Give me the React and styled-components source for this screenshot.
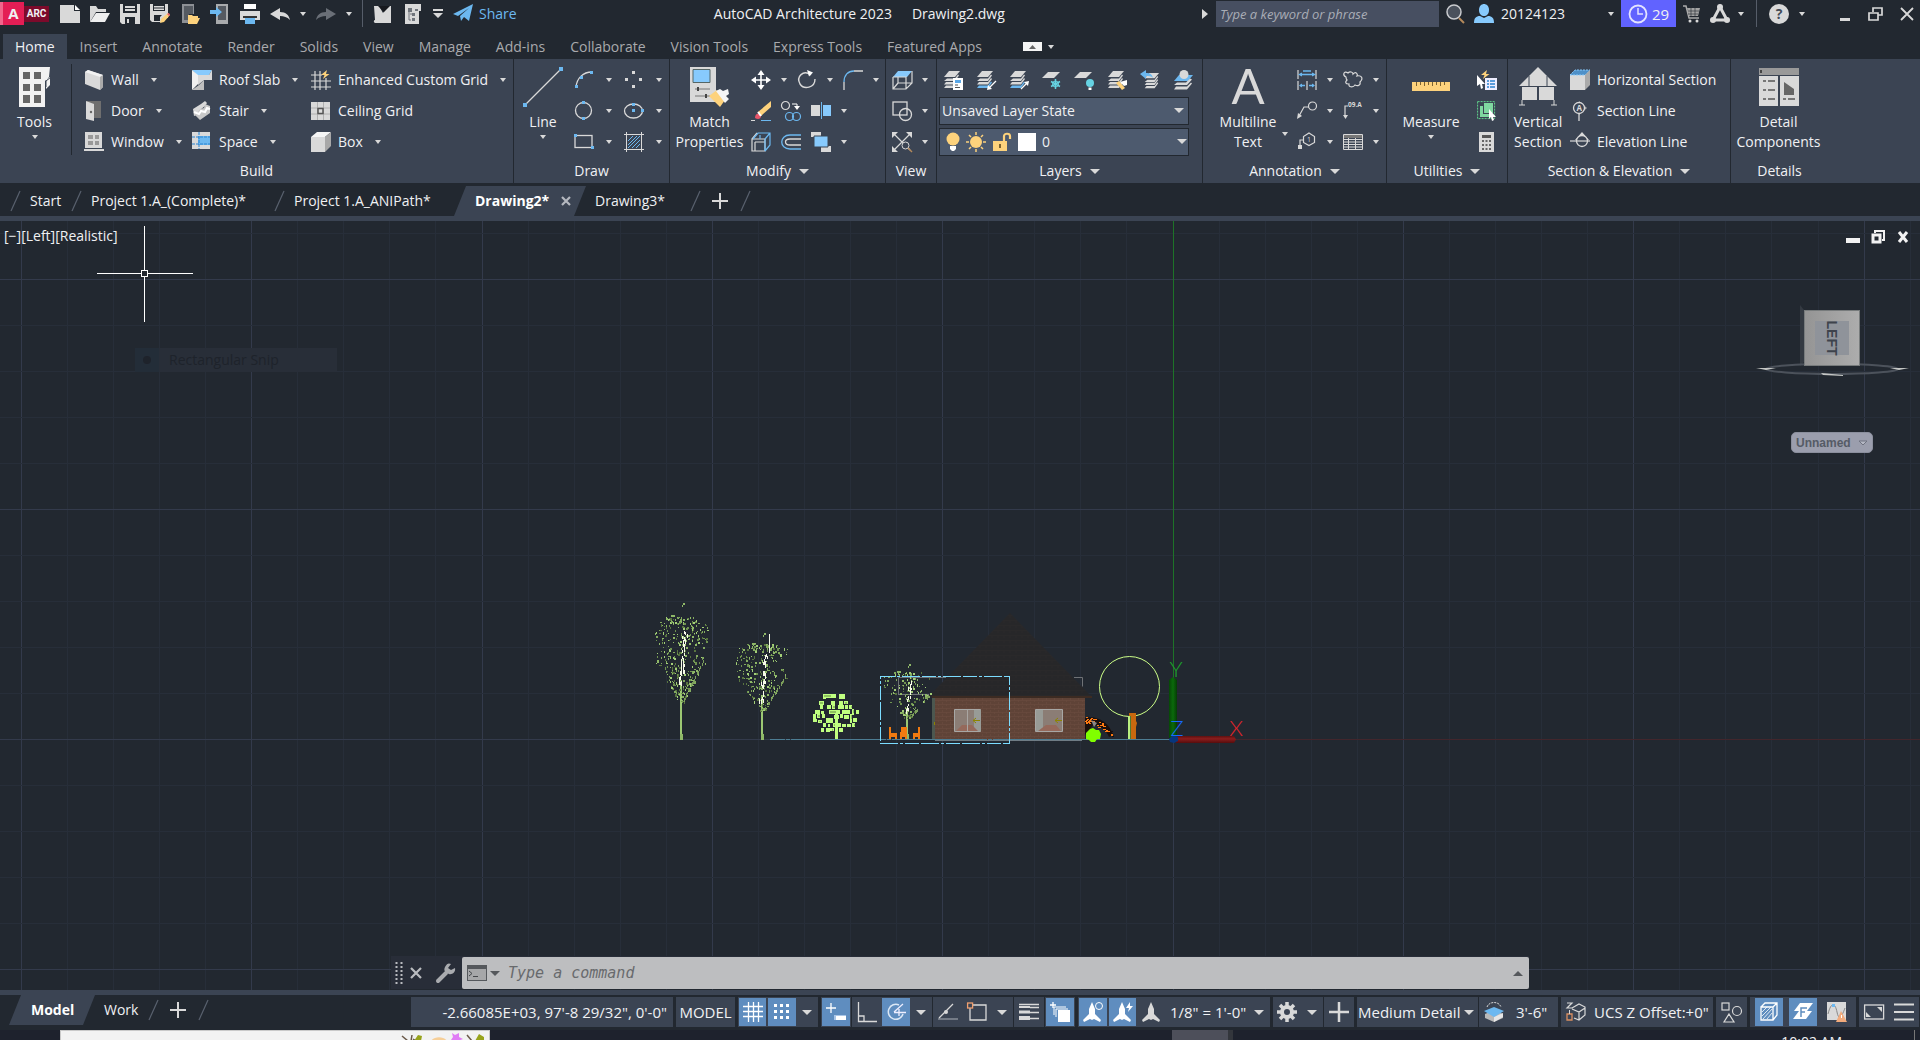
import React from "react";
import styled, { createGlobalStyle, css } from "styled-components";

const c = {
  dark: "#222830",
  panel: "#3b4453",
  field: "#4d5a6e",
  text: "#f0f1f3",
  icon: "#d9d9d9",
  sky: "#87cafd",
  blue: "#6cb8f0",
  gold: "#fdd27c",
  on: "#5f8dbf",
  teal: "#66d3e3",
};

const Global = createGlobalStyle`
  * { box-sizing: border-box; }
  body { margin: 0; background: ${c.dark}; overflow: hidden; }
  button, input, select { font: inherit; color: inherit; background: none; border: 0; padding: 0; margin: 0; border-radius: 0; }
  svg { display: block; flex: none; }
`;

const Page = styled.div`
  height: 100vh;
  display: flex;
  flex-direction: column;
  color: ${c.text};
  background: ${c.dark};
  font: 14px/20px "Open Sans", "Noto Sans", sans-serif;
  white-space: nowrap;
`;

/* ---------- icons ---------- */
const Svg = ({ w = 20, h = 20, children, ...p }) => (
  <svg width={w} height={h} viewBox={`0 0 ${w} ${h}`} fill="none" stroke="none" overflow="visible" aria-hidden="true" {...p}>{children}</svg>
);
const Caret = () => <Svg w={6} h={4}><path d="M0 0h6L3 4z" fill={c.icon} /></Svg>;
const WideCaret = ({ up, fill = c.icon }) => (
  <Svg w={10} h={5}><path d={up ? "M0 5h10L5 0z" : "M0 0h10L5 5z"} fill={fill} /></Svg>
);
const G = c.icon;
const Layers = ({ first = G, x = 0 }) => (
  <g transform={`translate(${x} 0)`}>
    <path d="M6 1h11l-5 6H1z" fill={G} />
    <path d="M4 8.500h8l3-4 1 1-4 5.500H1z" fill={G} />
    <path d="M3 12h9l3-4 1 1-4 5.500H1z" fill={G} />
    <path d="M3 15.500h9l3-4 1 1-4 5.500H1z" fill={first} />
  </g>
);
const Bolt = ({ x = 0, y = 0 }) => <path transform={`translate(${x} ${y})`} d="M6 0L0 5h3.500L2 9l6.500-5H5z" fill={c.gold} />;

const icons = {
  new: <><path d="M0 2h14v6h6v12H0z" fill={G} transform="translate(0 -1)" /><path d="M15 1v5h5z" fill="#fff" /></>,
  open: <><path d="M0 18V2h6l2 3h8v3H6z" fill={G} /><path d="M6 9h14l-5 9H0z" fill="#eee" /></>,
  save: <path fillRule="evenodd" d="M0 0h20v20H2l-2-2zM3 0v9h14V0zM5 13v7h10v-7zM5 2h10v2H5zM5 5h10v2H5zM7 15h2v4H7z" fill={G} />,
  saveas: <><path fillRule="evenodd" d="M0 0h18v14h-6v4H2l-2-2zM3 0v7h12V0zM4 2h10v1.500H4zM4 4.500h10V6H4zM4 11v6h6v-4l2-2z" fill={G} /><path d="M10 19l1-4 7-6 2 2-6 7z" fill={c.gold} /><path d="M17 10l2-1 1 2-1 1z" fill="#e8566a" /></>,
  mobileOpen: <><path d="M2 0h12v10H9v9H2z" fill="#8d9095" /><path d="M4 2h9v8H9v6H4z" fill="#555a61" /><path d="M8 11h4l1 1h5v2h2l-3 6H8z" fill={c.gold} /></>,
  mobileSave: <><rect x="6" width="12" height="20" fill="#a9abad" /><rect x="8" y="2" width="8" height="14" fill="#555a61" /><path d="M0 6h6V3l6 5-6 5V10H0z" fill={c.blue} /></>,
  print: <><path d="M4 0h12v5H4z" fill="#fff" /><path d="M0 7h20v9H0z" fill={G} /><path d="M3 12h14v2H3z" fill="#333" /><path d="M5 14h10v6H5z" fill={c.blue} /></>,
  undo: <path d="M0 10l10-6v4c6 0 9 3 10 8-3-3-6-4-10-4v4z" fill={G} />,
  redo: <path d="M20 10L10 4v4C4 8 1 11 0 16c3-3 6-4 10-4v4z" fill="#6a6f77" />,
  notes: <><path d="M1 2h5l4 7 5-7h3v17H2c-2-1-1-3 0-3z" fill={G} /><path d="M5 2h12l-6 6z" fill="#17191e" /></>,
  list: <><path d="M2 0h16v7h-2v13H2z" fill={G} /><path d="M5 4h4v4H5zM9 9h3v3H9zM9 14h3v3H9zM12 5h3v2h-3z" fill="#70757c" /><path d="M6 8v8h2M7 10h2" stroke="#70757c" /></>,
  plane: <path d="M0 10L20 0l-4 17-5-4-3 4-1-5L16 4 5 12z" fill={c.blue} />,
  search: <><circle cx="9" cy="8" r="7" stroke="#c9cbcf" strokeWidth="1.500" fill="#4a515c" /><path d="M14 14l5 5" stroke="#b58a5c" strokeWidth="2" /></>,
  user: <><path d="M5 6c0-8 10-8 10 0s-10 8-10 0z" fill={c.sky} /><path d="M0 19c0-5 2-7 6-7l4 2 4-2c4 0 6 2 6 7z" fill={c.sky} /></>,
  clock: <><circle cx="10" cy="10" r="8.500" stroke="#e4e4ff" strokeWidth="1.800" /><path d="M10 4v6h5" stroke="#e4e4ff" strokeWidth="1.500" /></>,
  cart: <><path d="M1 2h3l3 12h10" stroke="#aaa" strokeWidth="1.500" /><path d="M5 4h13l-2 8H7z" fill="#a3a3a3" /><path d="M6 7h11M6 10h10M9 4v8M13 4v8" stroke={c.dark} strokeWidth=".6" /><circle cx="8" cy="17" r="1.500" fill={G} /><circle cx="15" cy="17" r="1.500" fill={G} /></>,
  autodesk: <><path d="M10 3L3 16h14z" stroke={G} strokeWidth="3" /><circle cx="10" cy="3" r="3" fill={G} /><circle cx="3" cy="16" r="3" fill={G} /><circle cx="17" cy="16" r="3" fill={G} /></>,
  wall: <><path d="M1 2l3-2 15 5v12l-3 3L1 14z" fill={G} /><path d="M1 2l3-2 15 5-3 2z" fill="#f2f2f2" /><path d="M16 7l3-2v12l-3 3z" fill="#aaa" /></>,
  roof: <><path d="M0 0h20l-3 5H5z" fill={c.sky} /><path d="M0 0l6 5v9L0 20z" fill="#f0f0f0" /><path d="M0 20l7-5 5-5v10z" fill="#bfbfbf" /><path d="M6 5h11l3-5v10h-8l-6 5z" fill={G} /></>,
  egrid: <><path d="M4 1v19M9 1v19M15 8v12M0 5h11M0 11h20M0 17h20" stroke={G} strokeWidth="1.200" /><Bolt x={10} /></>,
  door: <><path d="M3 0h14v17H3z" fill="#6f6f6f" /><path d="M2 0l8 3v17l-8-2z" fill={G} /><circle cx="7" cy="11" r="1.200" fill="#666" /></>,
  stair: <><path d="M1 8l8-5 4-3 2 2-2 3-5 4-1 4-5 2z" fill={G} /><path d="M2 13l4-2 2-3 4-1 1-4 5 2v7L8 19z" fill="#c8c8c8" /><path d="M2 11l5 2 2-3 4 1 2-4 3 1" stroke="#fff" strokeWidth="2" /></>,
  ceiling: <><path d="M0 1h19v18H0z" fill={G} /><path d="M6.500 1v18M12.500 1v18M0 7h19M0 13h19" stroke="#b0b0b0" /><rect x="7" y="7.500" width="5" height="5" stroke="#555" strokeWidth="1.500" fill="#ddd" /></>,
  window: <><path d="M1 0h17v16H1z" fill={G} /><path d="M4 3h5v4H4zM11 3h4v4h-4zM4 9h5v4H4zM11 9h4v4h-4z" fill="#999" /><path d="M0 17h20v2H0z" fill={G} /></>,
  space: <><path d="M0 0h18v17H0z" fill={G} /><path d="M6 4h12v9H6z" fill={c.blue} /><path d="M0 5h18M0 12h18M7 0v17" stroke="#2b83cf" strokeDasharray="3 1" /></>,
  box: <><path d="M0 5h14v15H0z" fill={G} /><path d="M0 5l6-5h14l-6 5z" fill="#f5f5f5" /><path d="M14 5l6-5v14l-6 6z" fill="#a8a8a8" /></>,
  arc: <><path d="M2 17C3 8 9 2 18 2" stroke={G} strokeWidth="1.300" /><path d="M1 15h3v3H1zM6 6h3v3H6zM16 1h3v3h-3z" fill={c.blue} /></>,
  point: <path d="M8 1h3v3H8zM1 8h3v3H1zM15 8h3v3h-3zM8 15h3v3H8z" fill={G} />,
  circle: <><circle cx="9.500" cy="9.500" r="8" stroke={G} strokeWidth="1.300" /><path d="M8 0h3v3H8zM8 16h3v3H8z" fill={c.blue} /></>,
  ellipse: <><ellipse cx="9.500" cy="10" rx="9" ry="7" stroke={G} strokeWidth="1.300" /><path d="M8 2h3v3H8zM8 8h3v3H8zM17 8h3v3h-3z" fill={c.blue} /></>,
  rect: <><rect x="1" y="3.500" width="17" height="12" stroke={G} strokeWidth="1.300" /><path d="M0 2h3v3H0zM17 14h3v3h-3z" fill={c.blue} /></>,
  hatch: <><path d="M2.500 0v20M17.500 0v20M0 2.500h20M0 17.500h20" stroke={G} /><path d="M4 9l5-5M4 13l9-9M4 16L16 4M8 16l8-8M12 16l4-4" stroke={c.blue} /></>,
  move: <><path d="M10 2v16M2 10h16" stroke="#fff" strokeWidth="1.600" /><path d="M10 0l3.500 5h-7zM10 20l3.500-5h-7zM0 10l5-3.500v7zM20 10l-5-3.500v7z" fill="#fff" /></>,
  rotate: <><path d="M14 5C6-1-1 7 3 14c4 6 15 4 15-5" stroke={G} strokeWidth="1.400" /><path d="M10 0l6 2.500-4 4z" fill="#fff" /></>,
  fillet: <><path d="M1 20V12M11 1h9" stroke={G} strokeWidth="1.300" /><path d="M1 12C1 5 5 1 11 1" stroke={c.blue} strokeWidth="1.300" /></>,
  erase: <><path d="M7 11L20 0v6L10 15z" fill={c.gold} /><path d="M4 17c0-4 3-6 6-2 0 3-3 4-6 2z" fill="#e8566a" /><path d="M7 11l3 4" stroke="#fff" strokeWidth="2" /><path d="M0 19.500h4" stroke={G} /><path d="M10 19.500h10" stroke={c.blue} /></>,
  copy: <><circle cx="4.500" cy="4.500" r="4" stroke={G} strokeWidth="1.200" /><path d="M11 3h5v3" stroke="#fff" /><path d="M13 5h6l-3 4z" fill="#fff" /><circle cx="8.500" cy="15.500" r="4" stroke={c.blue} strokeWidth="1.200" /><circle cx="15.500" cy="15.500" r="4" stroke={c.blue} strokeWidth="1.200" /></>,
  mirror: <><path d="M0 4h9v11H0z" fill={G} /><path d="M12 4h8v11h-8z" fill={c.sky} /><path d="M10.500 1v17" stroke={c.blue} /></>,
  extrude: <><path d="M1 7h13v12H1zM4 10h10M4 10v9M1 7l5-6" stroke={G} strokeWidth="1.200" /><path d="M2 7l5-6h12v12l-5 6M14 7l5-6M14 7v12M9 3v4" stroke={c.blue} strokeWidth="1.200" /></>,
  offset: <><path d="M20 3H9C-2 3-2 17 9 17h11" stroke={c.blue} strokeWidth="1.300" /><path d="M20 7H9c-6 0-6 6 0 6h11" stroke={G} strokeWidth="1.300" /></>,
  order: <><path d="M0 0h10v5H0zM10 14h10v6H10z" fill={G} /><path d="M3 4h14v11H3z" fill={c.sky} stroke={c.panel} /></>,
  cube: <><path d="M6 1h14l-5 6H1z" fill={c.sky} /><path d="M1 7v12h13l6-6V1M14 19V7H1M6 7v6h14M6 13l-5 6" stroke={G} strokeWidth="1.200" /></>,
  shapes: <><rect x="1" y="1" width="14" height="13" stroke={G} strokeWidth="1.300" /><circle cx="13.500" cy="13.500" r="6" stroke={G} strokeWidth="1.300" /></>,
  zoomx: <><path d="M2 2l16 16M18 2L2 18" stroke={G} strokeWidth="1.200" /><path d="M0 0h6L0 6zM20 0v6l-6-6zM0 20v-6l6 6z" fill={G} /><circle cx="13.500" cy="13.500" r="3.500" stroke={G} fill={c.panel} /><path d="M16 16l4 4" stroke="#b58a5c" strokeWidth="1.500" /></>,
  layerProps: <><Layers /><path d="M10 8h10v12H10z" fill="#fff" /><path d="M12 10h6v3h-6z" fill="#5aa7e6" /><path d="M12 15h3M12 17.500h5" stroke="#555" /></>,
  layerIn: <><Layers first={c.blue} /><path d="M20 11l-7 7" stroke="#fff" strokeWidth="1.300" /><path d="M11 20l1-5 4 4z" fill="#fff" /></>,
  layerOut: <><Layers first={c.blue} /><path d="M12 19l6-6" stroke="#fff" strokeWidth="1.300" /><path d="M20 11l-1 5-4-4z" fill="#fff" /></>,
  layerFreeze: <><path d="M6 2h12l-6 6H0z" fill={G} /><path d="M13.500 9v10M9 11.500l9 5M9 16.500l9-5" stroke={c.teal} strokeWidth="1.500" /><circle cx="13.500" cy="14" r="3" stroke={c.teal} /></>,
  layerOff: <><path d="M6 2h12l-6 6H0z" fill={G} /><circle cx="16" cy="13" r="4" fill={c.teal} /><path d="M14.500 17.500h3V20h-3z" fill="#fff" /></>,
  layerMatch: <><Layers /><path d="M9 13l3-2 6 7-3 2z" fill={c.gold} /><path d="M13 12l7-2v5l-3 1z" fill="#fff" /></>,
  layerPrev: <><g transform="translate(2 2) scale(.9)"><Layers x={2} /></g><path d="M0 4l6-4v3c4 0 6 1 7 5-2-2-4-2-7-2v3z" fill={c.blue} /></>,
  layerIso: <><path d="M6 5h14l-5 6H1z" fill={c.blue} /><circle cx="11" cy="4.500" r="4.500" fill={G} /><path d="M4 12.500h9l4-4 2 1-5 5.500H1zM3 16.500h11l4-4 1 1-5 6H1z" fill={G} /></>,
  dim: <><path d="M1 0v9M19 0v9M1 11v9M10 11v9M19 11v9" stroke={G} strokeWidth="1.200" /><path d="M3 4.500h14M6 1h8M3 15.500h5M12 15.500h5" stroke={c.blue} strokeWidth="1.300" /><path d="M1 4.500l4-2v4zM19 4.500l-4-2v4zM2 15.500l3-2v4zM18 15.500l-3-2v4z" fill={c.blue} /></>,
  cloud: <path d="M3 7c-4-2-2-7 2-4 2-2 5-1 5 1 3-3 5 0 4 2 4-1 7 2 3 6 1 4-3 4-5 3-2 3-7 2-6-1-4 0-4-2-2-4-1-1-1-2-1-3z" stroke={G} strokeWidth="1.200" />,
  leader: <><circle cx="15.500" cy="5" r="4" stroke={G} strokeWidth="1.200" /><path d="M12 6H7l-5 9" stroke={G} strokeWidth="1.200" /><path d="M0 18l1-6 4 3z" fill={G} /></>,
  keynote: <><path d="M5 5H2v11" stroke={G} strokeWidth="1.200" /><path d="M0 14h5l-2.500 4z" fill={G} /><text x="5" y="6" fontSize="6.500" fontWeight="700" fill={G}>09.A</text></>,
  tag: <><path d="M12 1l5.500 3.500v6L12 13.500 6.500 10.500v-6z" stroke={G} strokeWidth="1.200" /><text x="10" y="10" fontSize="7" fill={G}>1</text><path d="M6 8H3v8" stroke={G} strokeWidth="1.200" /><path d="M1 13h4v4H1z" fill={G} /></>,
  table: <><path d="M.5 2.500h19v15H.5zM0 7.500h20M0 12.500h20M0 10h20M0 15h20" stroke={G} /><path d="M5.500 6v12M12.500 6v12" stroke={G} /><path d="M1 3h18v3H1z" fill="#777" /></>,
  quick: <><Bolt x={4} /><path d="M0 5l8 9H5l1 4-2 1-1-5-3 2z" fill="#fff" /><path d="M8 8h12v12H8z" fill="#eef" /><path d="M10 11h2M10 14h2M10 17h2M13 11h5M13 14h5M13 17h5" stroke="#2b83cf" strokeWidth="1.300" /></>,
  select: <><rect x=".6" y=".6" width="17" height="17" stroke="#5fd08a" strokeDasharray="2 1" /><path d="M3 5h3v8h8v3H3z" fill="#7fd8a0" /><path d="M7 2h9v10H7z" fill="#7fd8a0" /><path d="M12 8l7 8h-3l1 3-2 1-1-4-2 2z" fill="#fff" /></>,
  calc: <><path d="M2 0h15v20H2z" fill={G} /><path d="M5 3h9v3H5z" fill="#555" /><path d="M5 8h2v2H5zM8.500 8h2v2h-2zM12 8h2v2h-2zM5 12h2v2H5zM8.500 12h2v2h-2zM12 12h2v2h-2zM5 16h2v2H5zM8.500 16h2v2h-2zM12 16h2v2h-2z" fill="#666" /></>,
  hsection: <><path d="M0 5h15v15H0z" fill={G} /><path d="M0 5l5-5h15l-5 5z" fill="#4e90c8" /><path d="M0 5l5-5h15l-5 5z" stroke={c.sky} strokeDasharray="2 1" /><path d="M15 5l5-5v15l-5 5z" fill="#aaa" /></>,
  sline: <><path d="M9 0l8 7-8 7z" fill="#aaa" /><circle cx="9" cy="7" r="5.500" fill={c.panel} stroke={G} strokeWidth="1.300" /><text x="6.500" y="9.800" fontSize="8" fontWeight="700" fill={G}>A</text><path d="M9 13v7" stroke={G} strokeWidth="1.300" /></>,
  eline: <><path d="M12 0l7 8H5z" fill={G} /><circle cx="12" cy="9" r="5.500" fill={c.panel} stroke={G} strokeWidth="1.300" /><path d="M0 9h20" stroke={G} strokeWidth="1.200" /></>,
};
const Icon = ({ n, w = 20 }) => <Svg w={w} viewBox="0 0 20 20">{icons[n]}</Svg>;

const bigIcons = {
  tools: <><path d="M5 0h30l-1 10-4 4v26H4V0z" fill="#f2f2f2" /><path d="M31 12l4-2v8l-4 4z" fill="#f2f2f2" /><path d="M31 20v-6l5-4" stroke={c.panel} /><path d="M8 5h7v7H8zM19 5h7v7h-7zM8 17h7v7H8zM19 17h7v7h-7zM8 28h7v8H8zM19 28h7v8h-7z" fill="#666" /></>,
  line: <><path d="M2 38L38 2" stroke={G} strokeWidth="1.300" /><path d="M0 36h4v4H0zM36 0h4v4h-4z" fill={c.blue} /></>,
  match: <><path d="M0 0h26v35H0z" fill={G} /><path d="M3 2.500h17v13H3z" fill={c.sky} stroke="#566" /><path d="M5 22h15M5 29h15" stroke="#777" /><path d="M7 20h2v4H7zM15 27h2v4h-2z" fill="#444" /><path d="M19 29l8-6 8 10-5 7z" fill={c.gold} /><path d="M26 24l4-2 3 2 5-2 1 5-3 2 3 3-4 4z" fill="#f5f5f5" /></>,
  mtext: <text x="20" y="37" textAnchor="middle" fontFamily="Lato" fontSize="49" fill={G}>A</text>,
  ruler: <><path d="M1 15h38v9H1z" fill={c.gold} /><path d="M5.500 15v4M9.500 15v3M13.500 15v4M17.500 15v3M21.500 15v4M25.500 15v3M29.500 15v4M33.500 15v3" stroke="#7b6231" /></>,
  vsection: <><path d="M20 0l19 19H1z" fill={G} /><path d="M4 20h15v13H4zM21 20h15v13H21z" fill={G} /><path d="M4 33v5M36 33v5M1 38h6M33 38h6" stroke={G} /><path d="M11 9v10M29 9v10M1 19.500h38" stroke={c.panel} /></>,
  detail: <><path d="M0 1h40v7H0z" fill="#999" /><path d="M1 3h2v3H1z" fill="#444" /><path d="M0 9h19v30H0zM21 9h19v30H21z" fill={G} /><path d="M25 15l10 7v6H25z" fill="#666" /><path d="M4 14h3M9 14h7M4 23h3M9 23h7M4 32h3M9 32h7M24 32h3M29 32h7" stroke="#555" strokeWidth="1.500" /></>,
};

/* ---------- title bar ---------- */
const TitleBar = styled.header`
  display: flex;
  align-items: center;
  height: 27px;
`;
const Bar = styled.div`
  display: flex;
  align-items: center;
  gap: ${(p) => p.$gap ?? 10}px;
`;
const Tool = styled.button`
  display: flex;
  align-items: center;
  gap: ${(p) => p.$gap ?? 10}px;
`;
const Logo = styled.div`
  display: flex;
  align-items: center;
  margin-right: 1px;
  font-weight: 700;
`;
const LogoA = styled.span`
  width: 24px;
  height: 23px;
  background: #e41e55;
  border-left: 3px solid #f2668c;
  text-align: center;
  line-height: 22px;
  font-size: 15px;
`;
const LogoArc = styled.span`
  width: 25px;
  height: 16px;
  background: #7c0a2b;
  font: 700 10px/16px Roboto, sans-serif;
  text-align: center;
`;
const Rule = styled.span`
  width: 1px;
  height: 27px;
  background: #565d69;
`;
const ShareLabel = styled.span`
  color: ${c.blue};
`;
const Title = styled.h1`
  flex: 1;
  display: flex;
  justify-content: center;
  gap: 20px;
  margin: 0;
  padding-top: 1px;
  font-size: 14px;
  font-weight: 400;
`;
const Search = styled.input`
  width: 223px;
  height: 26px;
  padding: 0 4px;
  margin-right: 6px;
  background: #474f61;
  font-size: 13px;
  font-style: italic;
  &::placeholder { color: #a9adb6; opacity: 1; }
`;
const Account = styled.button`
  display: flex;
  align-items: center;
  gap: 7px;
  width: 140px;
  margin: 0 7px 0 9px;
  > :last-child { margin-left: auto; }
`;
const Trial = styled.button`
  display: flex;
  align-items: center;
  gap: 4px;
  width: 55px;
  height: 27px;
  padding-left: 7px;
  margin-right: 6px;
  background: #6163ff;
  font-size: 15px;
`;
const Help = styled.span`
  width: 20px;
  height: 20px;
  border-radius: 50%;
  background: ${G};
  color: #444b57;
  font-weight: 700;
`;
const WindowButtons = styled.div`
  display: flex;
  align-items: center;
  justify-content: space-between;
  width: 74px;
  margin: 0 6px 0 35px;
`;

/* ---------- ribbon ---------- */
const Tabs = styled.nav`
  display: flex;
  align-items: stretch;
  gap: 1px;
  height: 32px;
  padding: 7px 0 0 3px;
`;
const Tab = styled.button`
  padding: 0 12px;
  line-height: 25px;
  color: ${(p) => (p.$active ? c.text : "#a9aaad")};
  background: ${(p) => (p.$active ? c.panel : "none")};
`;
const Collapse = styled.button`
  display: flex;
  align-items: center;
  gap: 6px;
  margin-left: 28px;
`;
const Ribbon = styled.section`
  display: flex;
  height: 124px;
  background: ${c.panel};
`;
const Panel = styled.div`
  width: ${(p) => p.$w}px;
  padding-top: 5px;
  border-right: ${(p) => (p.$last ? 0 : 1)}px solid ${c.dark};
`;
const PanelBody = styled.div`
  display: flex;
  height: 93px;
  padding-left: ${(p) => p.$pad ?? 0}px;
`;
const PanelTitle = styled.div`
  display: flex;
  align-items: center;
  justify-content: center;
  gap: 8px;
  height: 26px;
  padding-top: 2px;
`;
const Big = styled.button`
  display: flex;
  flex-direction: column;
  align-items: center;
  gap: 3px;
  width: ${(p) => p.$w}px;
  padding: 3px 2px 0 0;
`;
const BigText = styled.span`
  padding-top: 2px;
  text-align: center;
  white-space: pre-line;
`;
const ToolsDivider = styled.span`
  width: 1px;
  height: 91px;
  margin-right: 12px;
  background: ${c.dark};
`;
const Col = styled.div`
  display: grid;
  grid-template-rows: repeat(3, 31px);
  width: ${(p) => (p.$w ? p.$w + "px" : "auto")};
`;
const Item = styled.button`
  display: flex;
  align-items: center;
  gap: 7px;
  > :nth-child(3) { margin-left: 5px; }
`;
const BigTool = ({ icon, w, caret, children }) => (
  <Big $w={w}>
    <Svg w={40} h={40}>{bigIcons[icon]}</Svg>
    <BigText>{children}</BigText>
    {caret && <Caret />}
  </Big>
);
const TextTool = ({ icon, caret, children }) => (
  <Item><Icon n={icon} /><span>{children}</span>{caret && <Caret />}</Item>
);
const Rows = ({ rows, gap }) => (
  <Col>
    {rows.map((row, i) => (
      <Bar key={i} $gap={gap}>
        {row.map(([n, caret]) => (
          <Tool key={n} aria-label={n} $gap={gap}><Icon n={n} />{caret && <Caret />}</Tool>
        ))}
      </Bar>
    ))}
  </Col>
);
const RibbonPanel = ({ title, menu, w, pad, last, children }) => (
  <Panel $w={w} $last={last}>
    <PanelBody $pad={pad}>{children}</PanelBody>
    <PanelTitle>{title}{menu && <WideCaret />}</PanelTitle>
  </Panel>
);
const LayerTools = styled.div`
  display: flex;
  align-items: center;
  justify-content: space-between;
  width: 250px;
  margin-left: 4px;
`;
const Combo = styled.label`
  display: flex;
  align-items: center;
  align-self: center;
  gap: 6px;
  width: 250px;
  height: 28px;
  padding: 0 ${(p) => p.$end ?? 4}px 0 ${(p) => p.$pad ?? 2}px;
  border: 1px solid ${c.dark};
  background: ${c.field};
`;
const Select = styled.select`
  flex: 1;
  appearance: none;
  outline: 0;
`;
const Swatch = styled.span`
  width: 18px;
  height: 18px;
  background: #fff;
`;
const MultiText = styled.div`
  display: flex;
  align-items: flex-end;
  width: 94px;
  padding: 0 0 21px 13px;
  > button { align-self: flex-start; }
`;

/* ---------- drawing tabs ---------- */
const FileTabs = styled.nav`
  display: flex;
  align-items: flex-end;
  height: 33px;
  padding-left: 11px;
`;
const FileTab = styled.button`
  display: flex;
  align-items: center;
  gap: ${(p) => p.$gap ?? 10}px;
  width: ${(p) => p.$w}px;
  height: 30px;
  ${(p) => p.$active && css`
    padding-left: 21px;
    background: ${c.panel};
    font-weight: 700;
    color: #fff;
    clip-path: polygon(12px 0, 100% 0, calc(100% - 12px) 100%, 0 100%);
  `}
`;
const Slash = () => <Svg w={9} h={20}><path d="M0 20L9 0" stroke="#59616e" strokeWidth="1.200" /></Svg>;
const Plus = () => <Svg w={16} h={16}><path d="M8 0v16M0 8h16" stroke={G} strokeWidth="2" /></Svg>;

/* ---------- viewport ---------- */
const Viewport = styled.main`
  position: relative;
  flex: 1;
  min-height: 0;
  overflow: hidden;
  border: solid ${c.panel};
  border-width: 5px 0;
`;
const Model = styled.svg`
  width: 100%;
  height: 100%;
`;
const ViewLabel = styled.div`
  position: absolute;
  left: 4px;
  top: 5px;
`;
const Snip = styled.div`
  position: absolute;
  left: 135px;
  top: 127px;
  display: flex;
  align-items: center;
  gap: 18px;
  width: 202px;
  height: 24px;
  padding-left: 8px;
  background: linear-gradient(90deg, #232d38 24px, #282e38 24px);
  color: #1e232b;
`;
const SnipDot = styled.span`
  width: 8px;
  height: 8px;
  border-radius: 50%;
  background: #1e232b;
`;
const ViewButtons = styled.div`
  position: absolute;
  right: 10px;
  top: 9px;
  display: flex;
  gap: 11px;
`;
const CubeBox = styled.div`
  position: absolute;
  right: 11px;
  top: 80px;
`;
const Ucs = styled.button`
  position: absolute;
  right: 47px;
  top: 211px;
  display: flex;
  align-items: center;
  justify-content: space-between;
  width: 82px;
  height: 21px;
  padding: 0 4px;
  border: 1px solid #8b8f9d;
  border-radius: 5px;
  background: #9b9ead;
  color: #555b66;
  font: 700 12px "Liberation Sans", Arial, sans-serif;
`;
const Command = styled.div`
  position: absolute;
  left: 50%;
  bottom: 1px;
  display: flex;
  width: 1138px;
  height: 33px;
  transform: translateX(-50%);
  background: #282d38;
`;
const CommandTools = styled.div`
  display: flex;
  align-items: center;
  gap: 7px;
  width: 71px;
  padding-left: 4px;
`;
const Prompt = styled.label`
  flex: 1;
  display: flex;
  align-items: center;
  gap: 3px;
  height: 32px;
  margin-top: 1px;
  padding: 0 6px 0 5px;
  border-radius: 2px;
  background: #bdbec0;
`;
const CommandInput = styled.input`
  flex: 1;
  padding-left: 5px;
  outline: 0;
  font: italic 15px "DejaVu Sans Mono", monospace;
  &::placeholder { color: #686a6d; opacity: 1; }
`;

const rng = (seed) => () => ((seed = (seed * 16807) % 2147483647) / 2147483647);
const GREENS = ["#8fb868", "#6f9350", "#a3cf78", "#58743f", "#83aa5f"];

/* A deciduous tree in elevation: wide ragged crown tapering down to the trunk. */
const Tree = ({ x, base, h, w, n, seed }) => {
  const r = rng(seed);
  const dots = [];
  const top = base - h;
  const crown = h * 0.62;
  for (let i = 0; i < n; i++) {
    const t = Math.pow(r(), 1.25);
    const half = t < 0.06 ? w * 0.6 : t < 0.55 ? w : w * Math.max(0.1, 1.9 - t * 1.8);
    const dx = (r() * 2 - 1) * half;
    dots.push(<rect key={i} x={Math.round(x + dx)} y={Math.round(top + h * 0.1 + t * crown)} width={r() > 0.65 ? 2 : 1} height={1 + Math.round(r() * 1.6)} fill={GREENS[Math.floor(r() * 5)]} />);
  }
  for (let i = 0; i < n / 9; i++) {
    const t = r();
    dots.push(<rect key={"w" + i} x={Math.round(x + 4 - t * 5 + (r() - 0.5) * 4)} y={Math.round(top + h * 0.2 + t * h * 0.42)} width="1" height={2 + Math.round(r() * 3)} fill="#f7fbe9" />);
  }
  for (let i = 0; i < n / 14; i++) {
    const t = r();
    dots.push(<rect key={"b" + i} x={Math.round(x + w * 0.9 - t * w * 0.8)} y={Math.round(top + h * 0.4 + t * h * 0.3)} width="1" height="3" fill="#7d9f5c" />);
  }
  return (
    <g shapeRendering="crispEdges">
      <rect x={x - 1} y={base - h * 0.42} width="2" height={h * 0.42} fill="#9cc873" />
      <rect x={x - 1} y={base - 6} width="3" height="6" fill="#8fb868" />
      <path d={`M${x + 1} ${top + 4}h1v-2h2v-2h-2v2h-1zM${x - 10} ${top + h * 0.09}h4v2h-4z`} fill="#8fb868" />
      {dots}
    </g>
  );
};

const LEAVES = [[549, 313, 40, 10], [597, 313, 17, 15], [549, 320, 8, 8], [537, 333, 14, 11], [573, 332, 12, 14], [597, 334, 12, 10], [612, 333, 12, 10], [540, 345, 10, 11], [560, 346, 14, 10], [576, 346, 10, 10], [594, 345, 17, 11], [616, 346, 8, 10], [628, 345, 8, 12], [525, 361, 14, 12], [544, 363, 8, 10], [567, 361, 34, 10], [606, 360, 14, 12], [622, 361, 8, 10], [636, 358, 6, 18], [647, 361, 9, 10], [519, 373, 8, 22], [530, 373, 10, 12], [545, 372, 10, 13], [558, 384, 22, 15], [583, 374, 14, 12], [600, 373, 10, 12], [612, 376, 14, 10], [629, 373, 6, 25], [638, 385, 12, 11], [522, 387, 9, 8], [534, 390, 12, 8], [549, 400, 10, 10], [563, 402, 8, 8], [578, 399, 26, 12], [606, 401, 11, 9], [620, 401, 14, 9], [637, 398, 8, 12], [543, 414, 10, 11], [557, 415, 12, 10], [571, 414, 10, 10], [598, 414, 12, 12]];

const Scene = () => {
  const grid = [];
  for (let i = -3; i < 46; i++) {
    const x = Math.floor(21.3 + i * 46.07) + 0.5;
    grid.push(<path key={"v" + i} d={`M${x} 0V1200`} stroke={i % 5 === 0 ? "#333a4b" : "#272e39"} />);
  }
  for (let i = -5; i < 24; i++) {
    const y = Math.floor(279.3 + i * 46.04) + 0.5;
    grid.push(<path key={"h" + i} d={`M0 ${y}H2000`} stroke={i % 5 === 0 ? "#333a4b" : "#272e39"} />);
  }
  const r = rng(77);
  return (
    <Model viewBox="0 221 1920 769" preserveAspectRatio="xMidYMid slice" fill="none" role="img" aria-label="Left elevation">
      <defs>
        <pattern id="brick" width="8" height="4" patternUnits="userSpaceOnUse">
          <rect width="8" height="4" fill="#5f4337" />
          <path d="M0 .5h8M2.500 0v2M6.500 2v2" stroke="#694b3e" strokeWidth=".7" />
        </pattern>
        <pattern id="shingle" width="6" height="5" patternUnits="userSpaceOnUse">
          <rect width="6" height="5" fill="#272729" />
          <path d="M0 .5h6M2 0v3" stroke="#2a292a" />
        </pattern>
        <linearGradient id="greenBar"><stop stopColor="#064706" /><stop offset=".5" stopColor="#0b6a0b" /><stop offset="1" stopColor="#053c05" /></linearGradient>
        <linearGradient id="redBar" x2="0" y2="1"><stop stopColor="#5d1010" /><stop offset=".4" stopColor="#8b1d1d" /><stop offset="1" stopColor="#560d0d" /></linearGradient>
      </defs>
      {grid}
      <path d="M1173.500 221V680" stroke="#1e7328" />
      <path d="M1235 739.500H1920" stroke="#42262c" />
      <Tree x={681} base={740} h={137} w={26} n={350} seed={11} />
      <Tree x={762} base={740} h={107} w={26} n={250} seed={29} />
      <path d="M769.500 634v19" stroke="#f7fbe9" />
      <g transform="translate(640 590) scale(.33333)" shapeRendering="crispEdges">
        {LEAVES.map(([x, y, w, h], i) => <rect key={i} x={x} y={y} width={w} height={h} fill="#c0ff80" />)}
        {LEAVES.filter((l, i) => i % 3 === 0).map(([x, y, w, h], i) => <rect key={"d" + i} x={x + 4} y={y + 3} width={w / 2} height={h / 2} fill="#8fc25f" />)}
        <path d="M585 370h9v76h-9z" fill="#c0ff80" />
      </g>
      {/* house */}
      <path d="M1010 613L1092 697H928z" fill="url(#shingle)" />
      <path d="M932 696h160v2H932z" fill="#3c2b22" />
      <path d="M935 698h150v42H935z" fill="url(#brick)" />
      <path d="M932 698h3v42h-3z" fill="#4c574f" />
      <path d="M935 740.500h147" stroke="#6f7c84" />
      <path d="M954.500 709.500h26v22h-26zM1035.500 709.500h27v22h-27z" fill="#8b7d75" stroke="#a7a7a5" />
      <path d="M974 710h7v21h-7zM1036 710h7v21h-7z" fill="#989b96" />
      <path d="M956 731l6-6h10l6 6zM1038 731l8-6h10l5 6z" fill="#95695b" />
      <path d="M967.500 710v21" stroke="#a9a5a1" />
      <path d="M973 720.500h7M976 718l-3 2.500 3 2.500M1055 720.500h7M1058 718l-3 2.500 3 2.500M934.500 722v3" stroke="#8d8500" />
      <path d="M898.500 694V677.500H946M898 694.500h31M1074 677.500h8.500v9" stroke="#6f7276" />
      <Tree x={907} base={740} h={76} w={24} n={150} seed={53} />
      <path d="M889 727h2v6h6v6h-2v-2h-4v2h-2zM901 727h6v12h-2v-2h-3v2h-2v-7h1zM920 727h-2v6h-5v6h2v-2h3v2h2z" fill="#f07a10" />
      <path d="M770 739.500h405" stroke="#4d7d93" strokeDasharray="15 1 4 1 80 0" />
      <path d="M880.500 676.500h129v67h-129z" stroke="#7bdcff" strokeDasharray="14 2 3 2 18 2" shapeRendering="crispEdges" />
      {/* planting beside the house */}
      <path d="M1085 718c10-3 24 3 28 17l-4 2c-3-8-10-12-16-12l-8 10z" fill="#1a0f0c" />
      {Array.from({ length: 60 }, (_, i) => {
        const a = r();
        return <rect key={i} x={Math.round(1085 + a * 27)} y={Math.round(717 + a * a * 15 + r() * 6)} width="2" height="1" fill={i % 4 ? "#ff7a12" : "#1a0f0c"} />;
      })}
      <path d="M1091 720l6 3-3 4z" fill="#888" />
      <path d="M1086 733l4-4 3-1 3 2 3 0 2 4-1 5-3 0-2 3h-4l-2-2-3-1z" fill="#80ff00" />
      <circle cx="1129.500" cy="686.500" r="30" stroke="#ccff88" />
      <path d="M1129 713h7v8l1 2-1 4v12h-6z" fill="#c8680f" />
      <path d="M1128 716h3v23h-3z" fill="#b9ef80" />
      <path d="M1130.500 716v23" stroke="#4f7a2f" />
      {/* coordinate axes */}
      <path d="M1169 680l4-3 4 3v58h-8z" fill="url(#greenBar)" />
      <path d="M1176 736h58l2 3.500-2 3.500h-58z" fill="url(#redBar)" />
      <path d="M1169 739l4-4 5 2v4l-4 2-4-1z" fill="#08367e" />
      <g fontFamily="Lato, sans-serif" fontWeight="300" fontSize="22" textAnchor="middle">
        <text x="1176" y="677" fill="#1da32b">Y</text>
        <text x="1177" y="736" fill="#1768ff">Z</text>
        <text x="1236" y="736" fill="#e0242b">X</text>
      </g>
      {/* cursor */}
      <path d="M97 273.500h44M148 273.500h45M144.500 226v44M144.500 277v45M141.500 270.500h6v6h-6z" stroke="#fff" shapeRendering="crispEdges" />
    </Model>
  );
};

const ViewCube = () => (
  <Svg w={154} h={80}>
    <defs><linearGradient id="face"><stop stopColor="#949494" /><stop offset="1" stopColor="#adadad" /></linearGradient></defs>
    <path d="M45 4l4 5v52l-4 4z" fill="#343a42" />
    <ellipse cx="77" cy="68" rx="66" ry="5" stroke="#4c525b" strokeWidth="2" />
    <path d="M1 67h20l-10 2zM135 67h19l-10 2zM66 72l22 2v1l-20-1z" fill="#c4c6c4" />
    <rect x="49.500" y="9.500" width="55" height="55" fill="url(#face)" stroke="#777b7c" />
    <rect x="60" y="20" width="34" height="34" fill="#8f939a" />
    <text transform="translate(72 37) rotate(90)" textAnchor="middle" fontFamily="Liberation Sans" fontSize="14" fontWeight="700" fill="#3e434c">LEFT</text>
  </Svg>
);

/* ---------- status bar ---------- */
const StatusBar = styled.footer`
  display: flex;
  height: 35px;
  padding: 0 1px 0 9px;
`;
const LayoutTab = styled(FileTab)`
  ${(p) => p.$active && "padding-left: 22px;"}
  ${(p) => p.$plain && "padding-left: 9px;"}
`;
const Status = styled.div`
  display: flex;
  gap: 3px;
  height: 30px;
  margin: 2px 0 0 auto;
`;
const Block = styled.div`
  display: flex;
  gap: 1px;
`;
const Group = styled.div`
  display: flex;
  align-items: center;
  justify-content: ${(p) => p.$justify ?? "flex-start"};
  gap: ${(p) => p.$gap ?? 2}px;
  width: ${(p) => p.$w}px;
  padding: 1px ${(p) => p.$pad ?? 1}px;
  background: ${c.panel};
`;
const Toggle = styled.button`
  display: grid;
  place-items: center;
  width: 28px;
  height: 28px;
  background: ${(p) => (p.$on ? c.on : "none")};
`;
const Arrow = styled.button`
  display: grid;
  place-items: center;
  width: 20px;
  height: 28px;
`;
const T = ({ n, on }) => <Toggle $on={on} aria-label={n} aria-pressed={!!on}><Svg>{statusIcons[n]}</Svg></Toggle>;
const Menu = () => <Arrow aria-label="Menu"><WideCaret /></Arrow>;
const W = "#fff";
const Mark = () => <path d="M9 0l3 7v5l6 6-1 2-6-3-2 1-2-1-6 3-1-2 6-6V7z" fill="currentColor" />;
const statusIcons = {
  grid: <path d="M5.500 0v20M10.500 0v20M15.500 0v20M0 4.500h20M0 9.500h20M0 14.500h20" stroke={W} strokeWidth="1.300" />,
  snap: <path d="M2 2h3v3H2zM8 2h3v3H8zM14 2h3v3h-3zM2 8h3v3H2zM8 8h3v3H8zM14 8h3v3h-3zM2 14h3v3H2zM8 14h3v3H8zM14 14h3v3h-3z" fill={W} />,
  dyn: <><path d="M5 1v10M0 6h10" stroke={W} strokeWidth="1.300" /><path d="M8 13h12v5H8z" fill="#a9c5e6" /><path d="M10 14h10v4H10z" fill={W} /></>,
  ortho: <path d="M1.500 0v19.500H20M1 14h6v5" stroke={G} strokeWidth="1.300" />,
  polar: <><path d="M13 3a7.500 7.500 0 1 0 4 9" stroke="#dbe7f5" strokeWidth="1.500" /><path d="M8 10.500h12M8 10L17 2M13 7v7" stroke="#eef" strokeWidth="1.300" /></>,
  iso: <><path d="M0 17h20" stroke="#888e97" strokeWidth="1.500" /><path d="M1 16L15 2" stroke={G} strokeWidth="1.300" /><circle cx="8" cy="10" r="2" fill={G} /></>,
  osnap: <><path d="M5 3h14v15H3V6" stroke={G} strokeWidth="1.300" /><rect x=".6" y="1" width="5" height="5" stroke="#f0a070" strokeWidth="1.300" fill={c.panel} /></>,
  lwt: <><path d="M0 4h11v2H0zM0 8.500h11v3H0zM0 14h11v4H0z" fill={G} /><path d="M0 2.500h20M11 5.500h9M11 10.500h9M11 16.500h9" stroke={G} strokeWidth="1.300" /></>,
  cycle: <><path d="M3 0v6M0 3h6" stroke={W} strokeWidth="1.300" /><path d="M4 13V5h12M6 15V7h12" stroke={W} strokeWidth="1" /><path d="M8 8h12v12H8z" fill={W} /></>,
  annoVis: <><g color="#fff"><Mark /></g><circle cx="16" cy="4" r="3.500" stroke={W} fill={c.on} /></>,
  annoAuto: <><g color="#fff"><Mark /></g><path d="M17 0l-4 6h3l-1 4 5-6h-3z" fill={W} /></>,
  anno: <g color={G}><Mark /></g>,
  plus: <path d="M10 0v20M0 10h20" stroke={G} strokeWidth="2.500" />,
  gear: <><circle cx="10" cy="10" r="5" stroke={G} strokeWidth="4" /><path d="M10 0v4M10 16v4M0 10h4M16 10h4M3 3l3 3M14 14l3 3M17 3l-3 3M3 17l3-3" stroke={G} strokeWidth="3.500" /></>,
  cut: <><path d="M1 12l9-4 9 4v4l-9 4-9-4z" fill="#b9b9b9" /><path d="M10 15l9-4v4l-9 5z" fill="#e6e6e6" /><path d="M0 9l10-4 10 4-10 6z" fill={c.blue} /><path d="M3 5c2-6 12-6 14 0" stroke={G} strokeDasharray="2 1" /></>,
  zoff: <><path d="M6 6l7-4 6 3v8l-6 5-5-2M6 7l7 3 6-4M13 10v8" stroke={G} strokeWidth="1.200" /><path d="M1 1h5L1 6h5" stroke={G} strokeWidth="1.200" /><path d="M1 12h5v6H1z" stroke="#d98e62" strokeWidth="1.300" /><path d="M3.500 8v4" stroke={G} /></>,
  objs: <><rect x="1" y="1" width="7" height="7" stroke={G} strokeWidth="1.200" /><circle cx="16" cy="9" r="4.500" stroke={G} strokeWidth="1.200" /><path d="M8 12l5 8H3z" stroke={G} strokeWidth="1.200" /></>,
  surf: <><path d="M2 5h12v13H2zM2 5l4-4h12v12l-4 5M14 5l4-4" stroke={W} strokeWidth="1.300" /><path d="M3 10l5-5M3 14l9-9M4 17l9-10M8 17l5-6" stroke={W} strokeWidth=".8" /></>,
  plates: <><path d="M7 1h13l-6 8H1z" fill={W} /><path d="M6 9h13l-6 8H0z" fill={W} /><path d="M8 15V6h6M8 10h4" stroke={c.on} strokeWidth="1.500" /></>,
  graph: <><path d="M0 0h19v18H0z" fill={G} /><path d="M1 12c3-12 7-12 9-2s5 4 8-4" stroke="#888" /><path d="M5 2h3v3H5z" fill={c.blue} /><path d="M14 9l6 11H9z" fill="#f2ab7c" /><path d="M14.500 13v3" stroke={W} /></>,
  full: <><rect x=".6" y="3" width="19" height="14" stroke={G} strokeWidth="1.300" /><path d="M18 5v5l-5-5zM2 15v-5l5 5z" fill={G} /></>,
  menu: <path d="M0 2.500h20M0 10h20M0 17.500h20" stroke={G} strokeWidth="2.200" />,
};
const Readout = styled.button`
  font-size: 15px;
`;

/* ---------- desktop taskbar ---------- */
const Taskbar = styled.div`
  display: flex;
  height: 10px;
  padding: 0 5px 0 60px;
  overflow: hidden;
  background: #1e222d;
`;
const SearchBox = styled.div`
  display: flex;
  justify-content: flex-end;
  width: 430px;
  border: 1px solid #c9c9c9;
  border-bottom: 0;
  background: #f2f2f2;
`;
const Running = styled.div`
  width: 61px;
  margin-left: 682px;
  background: linear-gradient(90deg, #4d4f5a 56px, #33363c 56px);
`;
const Clock = styled.time`
  margin: 2px 72px 0 auto;
`;
const Edge = styled.span`
  width: 1px;
  background: #777;
`;

const MENU = ["Home", "Insert", "Annotate", "Render", "Solids", "View", "Manage", "Add-ins", "Collaborate", "Vision Tools", "Express Tools", "Featured Apps"];

export default function App() {
  return (
    <Page>
      <Global />
      <TitleBar>
        <Bar>
          <Logo><LogoA>A</LogoA><LogoArc>ARC</LogoArc></Logo>
          {["new", "open", "save", "saveas", "mobileOpen", "mobileSave", "print"].map((n) => <Tool key={n} aria-label={n}><Icon n={n} /></Tool>)}
          <Tool aria-label="Undo"><Icon n="undo" /><Caret /></Tool>
          <Tool aria-label="Redo"><Icon n="redo" /><Caret /></Tool>
          <Rule />
          <Tool aria-label="Notes"><Icon n="notes" /></Tool>
          <Tool aria-label="List"><Icon n="list" /></Tool>
          <Tool aria-label="Customize"><Svg w={10} h={10}><path d="M0 0h10v2H0zM0 4h10L5 9z" fill={G} /></Svg></Tool>
          <Tool $gap={6}><Icon n="plane" /><ShareLabel>Share</ShareLabel></Tool>
        </Bar>
        <Title><span>AutoCAD Architecture 2023</span><span>Drawing2.dwg</span></Title>
        <Bar $gap={8}>
          <Svg w={6} h={10}><path d="M0 0l6 5-6 5z" fill={G} /></Svg>
          <Search placeholder="Type a keyword or phrase" aria-label="Search help" />
        </Bar>
        <Tool aria-label="Search"><Icon n="search" /></Tool>
        <Account><Icon n="user" /><span>20124123</span><Caret /></Account>
        <Trial><Icon n="clock" />29</Trial>
        <Bar $gap={8}>
          <Tool aria-label="Cart"><Icon n="cart" /></Tool>
          <Tool aria-label="Autodesk" $gap={8}><Icon n="autodesk" /><Caret /></Tool>
        </Bar>
        <Bar $gap={12}>
          <span />
          <Rule />
          <Tool aria-label="Help"><Help>?</Help><Caret /></Tool>
        </Bar>
        <WindowButtons>
          <Tool aria-label="Minimize"><Svg w={10} h={14}><path d="M0 11h10v3H0z" fill={G} /></Svg></Tool>
          <Tool aria-label="Restore"><Svg w={15} h={14}><path d="M5 5V1h9v7h-4M1 6h9v7H1z" stroke={G} strokeWidth="1.700" /></Svg></Tool>
          <Tool aria-label="Close"><Svg w={14} h={14}><path d="M1 1l12 12M13 1L1 13" stroke={G} strokeWidth="1.800" /></Svg></Tool>
        </WindowButtons>
      </TitleBar>

      <Tabs>
        {MENU.map((m) => <Tab key={m} $active={m === "Home"}>{m}</Tab>)}
        <Collapse aria-label="Minimize ribbon">
          <Svg w={19} h={9}><path d="M0 0h19v9H0z" fill="#f5f5f5" /><path d="M6 7h7l-3.500-4z" fill="#666" /></Svg><Caret />
        </Collapse>
      </Tabs>

      <Ribbon>
        <RibbonPanel title="Build" w={514}>
          <BigTool icon="tools" w={71} caret>Tools</BigTool>
          <ToolsDivider />
          <Col $w={108}>
            <TextTool icon="wall" caret>Wall</TextTool>
            <TextTool icon="door" caret>Door</TextTool>
            <TextTool icon="window" caret>Window</TextTool>
          </Col>
          <Col $w={119}>
            <TextTool icon="roof" caret>Roof Slab</TextTool>
            <TextTool icon="stair" caret>Stair</TextTool>
            <TextTool icon="space" caret>Space</TextTool>
          </Col>
          <Col>
            <TextTool icon="egrid" caret>Enhanced Custom Grid</TextTool>
            <TextTool icon="ceiling">Ceiling Grid</TextTool>
            <TextTool icon="box" caret>Box</TextTool>
          </Col>
        </RibbonPanel>
        <RibbonPanel title="Draw" w={156}>
          <BigTool icon="line" w={60} caret>Line</BigTool>
          <Rows gap={12} rows={[[["arc", 1], ["point", 1]], [["circle", 1], ["ellipse", 1]], [["rect", 1], ["hatch", 1]]]} />
        </RibbonPanel>
        <RibbonPanel title="Modify" menu w={216}>
          <BigTool icon="match" w={81}>{"Match\nProperties"}</BigTool>
          <Rows gap={10} rows={[[["move", 1], ["rotate", 1], ["fillet", 1]], [["erase"], ["copy"], ["mirror", 1]], [["extrude"], ["offset"], ["order", 1]]]} />
        </RibbonPanel>
        <RibbonPanel title="View" w={51} pad={6}>
          <Rows gap={10} rows={[[["cube", 1]], [["shapes", 1]], [["zoomx", 1]]]} />
        </RibbonPanel>
        <RibbonPanel title="Layers" menu w={266} pad={2}>
          <Col>
            <LayerTools>
              {["layerProps", "layerIn", "layerOut", "layerFreeze", "layerOff", "layerMatch", "layerPrev", "layerIso"].map((n) => <Tool key={n} aria-label={n}><Icon n={n} /></Tool>)}
            </LayerTools>
            <Combo>
              <Select aria-label="Layer state"><option>Unsaved Layer State</option></Select>
              <WideCaret />
            </Combo>
            <Combo $pad={6} $end={1}>
              <Svg w={14}><circle cx="7" cy="7" r="6.500" fill={c.gold} /><path d="M4 11h6v2H4z" fill={c.gold} /><path d="M4 14h6v3l-2 2H6l-2-2z" fill="#fff" /></Svg>
              <Svg><circle cx="10" cy="10" r="6" fill={c.gold} /><path d="M10 0v3M10 17v3M0 10h3M17 10h3M3 3l2 2M15 15l2 2M17 3l-2 2M3 17l2-2" stroke={c.gold} strokeWidth="1.500" /></Svg>
              <Svg><path d="M1 9h14v10H1z" fill={c.gold} /><path d="M12 9V4c0-3 6-3 6 0v3" stroke={c.gold} strokeWidth="2.200" /><path d="M7 12h2v4H7z" fill="#7b6231" /></Svg>
              <Swatch />
              <Select aria-label="Layer"><option>0</option></Select>
              <WideCaret />
            </Combo>
          </Col>
        </RibbonPanel>
        <RibbonPanel title="Annotation" menu w={184}>
          <MultiText><BigTool icon="mtext" w={66}>{"Multiline\nText"}</BigTool><Caret /></MultiText>
          <Rows gap={10} rows={[[["dim", 1], ["cloud", 1]], [["leader", 1], ["keynote", 1]], [["tag", 1], ["table", 1]]]} />
        </RibbonPanel>
        <RibbonPanel title="Utilities" menu w={121}>
          <BigTool icon="ruler" w={90} caret>Measure</BigTool>
          <Rows gap={10} rows={[[["quick"]], [["select"]], [["calc"]]]} />
        </RibbonPanel>
        <RibbonPanel title="Section & Elevation" menu w={223}>
          <BigTool icon="vsection" w={62}>{"Vertical\nSection"}</BigTool>
          <Col>
            <TextTool icon="hsection">Horizontal Section</TextTool>
            <TextTool icon="sline">Section Line</TextTool>
            <TextTool icon="eline">Elevation Line</TextTool>
          </Col>
        </RibbonPanel>
        <RibbonPanel title="Details" w={97} last>
          <BigTool icon="detail" w={97}>{"Detail\nComponents"}</BigTool>
        </RibbonPanel>
      </Ribbon>

      <FileTabs>
        <FileTab $w={61}><Slash />Start</FileTab>
        <FileTab $w={203}><Slash />Project 1.A_(Complete)*</FileTab>
        <FileTab $w={179}><Slash />Project 1.A_ANIPath*</FileTab>
        <FileTab $w={132} $gap={12} $active>
          Drawing2*<Svg w={10} h={10}><path d="M1 1l8 8M9 1L1 9" stroke="#b4b8bf" strokeWidth="2.200" /></Svg>
        </FileTab>
        <LayoutTab $w={105} $plain>Drawing3*</LayoutTab>
        <FileTab $w={50} $gap={12} aria-label="New drawing"><Slash /><Plus /></FileTab>
        <FileTab as="span" $w={9}><Slash /></FileTab>
      </FileTabs>

      <Viewport>
        <Scene />
        <ViewLabel>[−][Left][Realistic]</ViewLabel>
        <Snip><SnipDot />Rectangular Snip</Snip>
        <ViewButtons>
          <Tool aria-label="Minimize view"><Svg w={14} h={14}><path d="M0 8h14v5H0z" fill="#f2f2f2" /></Svg></Tool>
          <Tool aria-label="Restore view"><Svg w={14} h={14}><path d="M4 3V1h9v9h-2" stroke="#f2f2f2" strokeWidth="2" /><rect x="2" y="5" width="7" height="7" stroke="#f2f2f2" strokeWidth="3" /></Svg></Tool>
          <Tool aria-label="Close view"><Svg w={14} h={14}><path d="M3 2l8 10M11 2L3 12" stroke="#f2f2f2" strokeWidth="3" /></Svg></Tool>
        </ViewButtons>
        <CubeBox><ViewCube /></CubeBox>
        <Ucs>Unnamed<Svg w={10} h={6}><path d="M1 1h8L5 5z" stroke="#6f7380" fill="#b5b8c4" /></Svg></Ucs>
        <Command>
          <CommandTools>
            <Svg w={8} h={22}><path d="M1.500 0v22M6.500 0v22" stroke="#b9bbbf" strokeWidth="2" strokeDasharray="2 2" /></Svg>
            <Svg w={12} h={12}><path d="M1 1l10 10M11 1L1 11" stroke="#b9bbbf" strokeWidth="2.200" /></Svg>
            <Svg w={28} h={20}><path d="M9 18l8-8" stroke="#a9abaf" strokeWidth="4" strokeLinecap="round" /><path d="M22 1l-3 4 3 2 4-2c1 4-3 7-6 6s-6-3-4-7 4-4 6-3z" fill="#a9abaf" /></Svg>
          </CommandTools>
          <Prompt>
            <Svg w={20} h={16}><rect x=".5" y=".5" width="19" height="15" stroke="#55585c" fill="#a6a7a9" /><path d="M0 0h20v4H0z" fill="#55585c" /><path d="M2 6l3 2.500L2 11M6 11.500h5" stroke="#44474b" /></Svg>
            <WideCaret fill="#55585c" />
            <CommandInput placeholder="Type a command" aria-label="Command line" />
            <WideCaret up fill="#55585c" />
          </Prompt>
        </Command>
      </Viewport>

      <StatusBar>
        <LayoutTab $w={86} $active>Model</LayoutTab>
        <LayoutTab $w={54} $plain>Work</LayoutTab>
        <LayoutTab $w={50} $gap={12} aria-label="New layout"><Slash /><Plus /></LayoutTab>
        <LayoutTab as="span" $w={9}><Slash /></LayoutTab>
        <Status>
          <Group $w={262} $pad={6} $justify="flex-end"><Readout>-2.66085E+03, 97'-8 29/32", 0'-0"</Readout></Group>
          <Group $w={59} $justify="center"><Readout>MODEL</Readout></Group>
          <Group $w={80}><T n="grid" on /><T n="snap" on /><Menu /></Group>
          <Block>
            <Group $w={30}><T n="dyn" on /></Group>
            <Group $w={80}><T n="ortho" /><T n="polar" on /><Menu /></Group>
            <Group $w={80}><T n="iso" /><T n="osnap" /><Menu /></Group>
            <Group $w={30}><T n="lwt" /></Group>
            <Group $w={30}><T n="cycle" on /></Group>
          </Block>
          <Group $w={192}><T n="annoVis" on /><T n="annoAuto" on /><T n="anno" /><Group $w={80} $justify="flex-end"><Readout>1/8" = 1'-0"</Readout></Group><Menu /></Group>
          <Block>
            <Group $w={50}><T n="gear" /><Menu /></Group>
            <Group $w={30}><T n="plus" /></Group>
          </Block>
          <Block>
            <Group $w={121} $gap={0}><Readout>Medium Detail</Readout><Menu /></Group>
            <Group $w={79} $gap={8}><T n="cut" /><Readout>3'-6"</Readout></Group>
          </Block>
          <Group $w={152} $gap={4}><T n="zoff" /><Readout>UCS Z Offset:+0"</Readout></Group>
          <Group $w={31}><T n="objs" /></Group>
          <Group $w={106} $pad={5} $gap={6}><T n="surf" on /><T n="plates" on /><T n="graph" /></Group>
          <Group $w={60}><T n="full" /><T n="menu" /></Group>
        </Status>
      </StatusBar>

      <Taskbar>
        <SearchBox>
          <Svg w={90} h={10}>
            <path d="M3 5l6 5M12 10l1-6M68 4l5 6M14 8l3 2" stroke="#6b5a4a" strokeWidth="1.500" />
            <path d="M15 10l4-6 4 1-1 5zM76 10l4-7 5 3v4z" fill="#97a31c" />
            <path d="M32 10c3-5 13-5 16 0z" fill="#f6cf98" />
            <path d="M53 2l3 2 4-2v4l4 2-5 2h-3l-4-1 2-3z" fill="#e07cf5" />
          </Svg>
        </SearchBox>
        <Running />
        <Clock>10:02 AM</Clock>
        <Edge />
      </Taskbar>
    </Page>
  );
}
